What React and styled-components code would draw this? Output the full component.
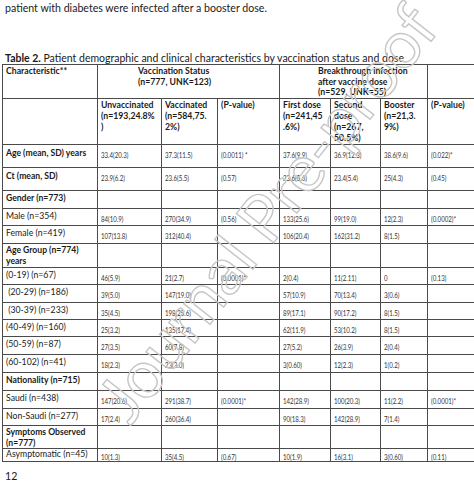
import React from "react";
import styled, { createGlobalStyle } from "styled-components";

const Global = createGlobalStyle`
  html, body { margin: 0; padding: 0; background: #fff; overflow: hidden; }
  body { font-family: Lato, "Open Sans", sans-serif; color: #1a1a1a; }
`;

const Page = styled.div`
  position: relative;
  width: 474px;
  height: 482px;
  overflow: hidden;
  padding-left: 2px;
  box-sizing: border-box;
`;

const Para = styled.p`
  margin: 1px 0 0 3px;
  font-size: 10.6px;
  line-height: 14px;
  white-space: nowrap;
`;

const Caption = styled.p`
  margin: 37px 0 0 3px;
  font-size: 10.5px;
  line-height: 12px;
  white-space: nowrap;
  b { font-weight: 700; }
`;

const Table = styled.table`
  border-collapse: collapse;
  table-layout: fixed;
  width: 473px;
  td {
    border: 1px solid #4a4a4a;
    vertical-align: top;
    padding: 0 0 0 3px;
    overflow: hidden;
  }
`;

const Row = styled.tr`
  height: ${(p) => p.$h}px;
`;

const HeadCell = styled.td`
  font-weight: 700;
  font-size: 8.7px;
  line-height: ${(p) => p.$lh || 10.6}px;
  white-space: nowrap;
  padding-top: ${(p) => p.$pt ?? 1}px !important;
  padding-left: ${(p) => p.$pl ?? 3}px !important;
`;

const Label = styled.td`
  font-size: ${(p) => (p.$bold ? 8.6 : 8.7)}px;
  line-height: 10.5px;
  font-weight: ${(p) => (p.$bold ? 700 : 400)};
  white-space: nowrap;
  padding-top: ${(p) => p.$pt ?? 2}px !important;
`;

const Value = styled.td`
  padding-top: ${(p) => p.$pt ?? 3}px !important;
  line-height: 8px;
`;

const Small = styled.span`
  display: inline-block;
  font-size: 6.8px;
  color: #333;
  white-space: nowrap;
  transform: scaleX(0.9);
  transform-origin: left center;
`;

const PageNum = styled.p`
  margin: 8px 0 0 3px;
  font-size: 10.6px;
  line-height: 12px;
`;

const Watermark = styled.div`
  position: absolute;
  left: 266px;
  top: 212px;
  width: max-content;
  transform: translate(-50%, -50%) rotate(-52deg);
  font-family: Lato, sans-serif;
  font-size: 66px;
  line-height: 1;
  white-space: nowrap;
  color: transparent;
  -webkit-text-stroke: 1.4px #c6c6c6;
  pointer-events: none;
`;

const widths = [95, 64, 56, 62, 51, 50, 47, 48];

const rows = [
  { label: "Age (mean, SD) years", bold: true, h: 23.4, pt: 3, v: ["33.4(20.3)", "37.3(11.5)", "(0.0011) *", "37.6(9.9)", "36.9(12.3)", "38.6(9.6)", "(0.022)*"] },
  { label: "Ct (mean, SD)", bold: true, h: 22.8, pt: 3, v: ["23.9(6.2)", "23.6(5.5)", "(0.57)", "23.6(5.6)", "23.4(5.4)", "25(4.3)", "(0.45)"] },
  { label: "Gender (n=773)", bold: true, h: 17.8, v: [] },
  { label: "Male (n=354)", h: 17.8, v: ["84(10.9)", "270(34.9)", "(0.56)", "133(25.6)", "99(19.0)", "12(2.3)", "(0.0002)*"] },
  { label: "Female (n=419)", h: 18, v: ["107(13.8)", "312(40.4)", "", "106(20.4)", "162(31.2)", "8(1.5)", ""] },
  { label: ["Age Group (n=774)", "years"], bold: true, h: 23.2, pt: 1, v: [] },
  { label: "(0-19) (n=67)", h: 17.8, v: ["46(5.9)", "21(2.7)", "(0.0001)*", "2(0.4)", "11(2.11)", "0", "(0.13)"] },
  { label: "\u00a0(20-29) (n=186)", h: 17.4, v: ["39(5.0)", "147(19.0)", "", "57(10.9)", "70(13.4)", "3(0.6)", ""] },
  { label: "\u00a0(30-39) (n=233)", h: 17.4, v: ["35(4.5)", "198(25.6)", "", "89(17.1)", "90(17.2)", "8(1.5)", ""] },
  { label: "(40-49) (n=160)", h: 17.1, v: ["25(3.2)", "135(17.4)", "", "62(11.9)", "53(10.2)", "8(1.5)", ""] },
  { label: "(50-59) (n=87)", h: 18.1, v: ["27(3.5)", "60(7.8)", "", "27(5.2)", "26(3.9)", "2(0.4)", ""] },
  { label: "(60-102) (n=41)", h: 18, v: ["18(2.3)", "23(3.0)", "", "3(0.60)", "12(2.3)", "1(0.2)", ""] },
  { label: "Nationality (n=715)", bold: true, h: 17.5, v: [] },
  { label: "Saudi (n=438)", h: 17.8, v: ["147(20.6)", "291(38.7)", "(0.0001)*", "142(28.9)", "100(20.3)", "11(2.2)", "(0.0001)*"] },
  { label: "Non-Saudi (n=277)", h: 17.4, v: ["17(2.4)", "260(36.4)", "", "90(18.3)", "142(28.9)", "7(1.4)", ""] },
  { label: ["Symptoms Observed", "(n=777)"], bold: true, h: 23.2, pt: 1, v: [] },
  { label: "Asymptomatic (n=45)", h: 12.1, pt: 0, v: ["10(1.3)", "35(4.5)", "(0.67)", "10(1.9)", "16(3.1)", "3(0.60)", "(0.11)"] },
];

const lines = (arr) =>
  arr.map((t, i) => (
    <React.Fragment key={i}>
      {i > 0 && <br />}
      {t}
    </React.Fragment>
  ));

export default function App() {
  return (
    <>
      <Global />
      <Page>
        <Para>patient with diabetes were infected after a booster dose.</Para>
        <Caption>
          <b>Table 2.</b> Patient demographic and clinical characteristics by vaccination status and dose
        </Caption>
        <Table>
          <colgroup>
            {widths.map((w, i) => (
              <col key={i} style={{ width: w }} />
            ))}
          </colgroup>
          <tbody>
            <Row $h={33.6}>
              <HeadCell>Characteristic**</HeadCell>
              <HeadCell colSpan={3} $pl={40}>
                {lines(["Vaccination Status", "(n=777, UNK=123)"])}
              </HeadCell>
              <HeadCell colSpan={3} $pl={38}>
                {lines(["Breakthrough infection", "after vaccine dose", "(n=529, UNK=55)"])}
              </HeadCell>
              <HeadCell />
            </Row>
            <Row $h={45}>
              <HeadCell />
              <HeadCell $lh={11.2} $pt={0}>{lines(["Unvaccinated", "(n=193,24.8%", ")"])}</HeadCell>
              <HeadCell $lh={11.2} $pt={0}>{lines(["Vaccinated", "(n=584,75.", "2%)"])}</HeadCell>
              <HeadCell $lh={11.2} $pt={0}>(P-value)</HeadCell>
              <HeadCell $lh={11.2} $pt={0}>{lines(["First dose", "(n=241,45", ".6%)"])}</HeadCell>
              <HeadCell $lh={11.2} $pt={0}>{lines(["Second", "dose", "(n=267,", "50.5%)"])}</HeadCell>
              <HeadCell $lh={11.2} $pt={0}>{lines(["Booster", "(n=21,3.", "9%)"])}</HeadCell>
              <HeadCell $lh={11.2} $pt={0}>(P-value)</HeadCell>
            </Row>
            {rows.map((r, i) => (
              <Row key={i} $h={r.h}>
                <Label $bold={r.bold} $pt={r.pt}>
                  {Array.isArray(r.label) ? lines(r.label) : r.label}
                </Label>
                {Array.from({ length: 7 }).map((_, j) => (
                  <Value key={j} $pt={r.pt !== undefined ? Math.max(r.pt, 1) : 3}>
                    {r.v[j] ? <Small>{r.v[j]}</Small> : null}
                  </Value>
                ))}
              </Row>
            ))}
          </tbody>
        </Table>
        <PageNum>12</PageNum>
        <Watermark>Journal Pre-proof</Watermark>
      </Page>
    </>
  );
}
